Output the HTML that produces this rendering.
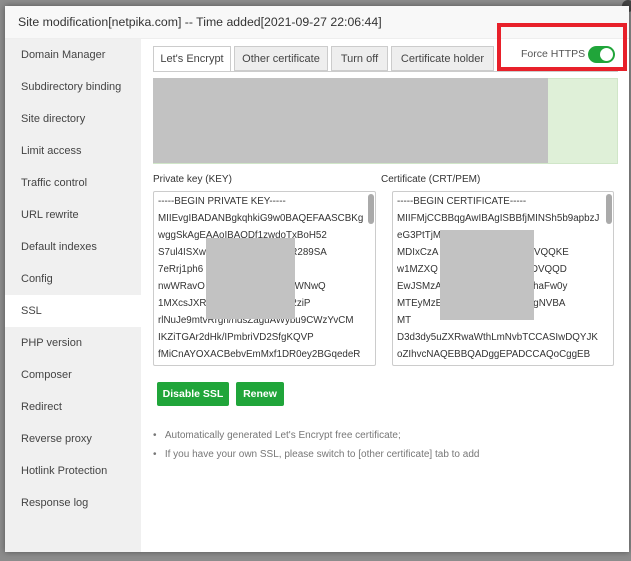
<!DOCTYPE html>
<html><head><style>
*{box-sizing:border-box;margin:0;padding:0}
body{width:631px;height:561px;overflow:hidden;background:#8c8c8c;font-family:"Liberation Sans",sans-serif;position:relative}
.dlg{position:absolute;left:5px;top:6px;width:624px;height:546px;background:#fff;box-shadow:0 0 6px rgba(0,0,0,.4)}
.title{height:33px;background:#f8f8f8;border-bottom:1px solid #eee;font-size:12.3px;color:#333;padding:9px 0 0 13px}
.side{position:absolute;left:0;top:33px;width:136px;bottom:0;background:#f0f0f0}
.side div{height:32px;line-height:32px;font-size:11px;color:#444;padding-left:16px}
.side .on{background:#fff}
.tab{position:absolute;top:0;height:25px;border:1px solid #ccc;background:#eee;font-size:11px;color:#444;text-align:center;line-height:24px}
.tab.on{background:#fff;border-bottom-color:#fff;height:26px}
.green{position:absolute;left:148px;top:72px;width:465px;height:86px;background:#dff0d8;border:1px solid #d0e6c8}
.gray{position:absolute;left:148px;top:72px;width:395px;height:85px;background:#c2c2c2}
.lbl{position:absolute;font-size:10px;color:#333}
.ta{position:absolute;top:185px;height:175px;border:1px solid #ccc;border-radius:2px;background:#fff;overflow:hidden;font-size:9.8px;color:#333;line-height:17px;padding:1px 0 0 4px;white-space:nowrap}
.sb{position:absolute;right:1px;top:2px;width:6px;height:30px;background:#aaa;border-radius:3px}
.btn{position:absolute;top:376px;height:24px;background:#20a53a;color:#fff;font-size:10.5px;font-weight:bold;line-height:24px;text-align:center;border-radius:2px}
.tip{position:absolute;left:148px;font-size:10px;color:#777}
</style></head><body>
<div style="position:absolute;left:622px;top:0;width:12px;height:12px;border-radius:50%;background:#444"></div>
<div class="dlg">
<div class="title">Site modification[netpika.com] -- Time added[2021-09-27 22:06:44]</div>
<div class="side">
<div>Domain Manager</div><div>Subdirectory binding</div><div>Site directory</div><div>Limit access</div><div>Traffic control</div><div>URL rewrite</div><div>Default indexes</div><div>Config</div><div class="on">SSL</div><div>PHP version</div><div>Composer</div><div>Redirect</div><div>Reverse proxy</div><div>Hotlink Protection</div><div>Response log</div>
</div>
<div class="tab on" style="left:148px;top:40px;width:78px">Let's Encrypt</div>
<div class="tab" style="left:229px;top:40px;width:94px">Other certificate</div>
<div class="tab" style="left:326px;top:40px;width:57px">Turn off</div>
<div class="tab" style="left:386px;top:40px;width:103px">Certificate holder</div>
<div style="position:absolute;left:148px;top:65px;width:465px;border-top:1px solid #ccc"></div>
<div class="lbl" style="left:516px;top:42px;font-size:10.5px;color:#555">Force HTTPS</div>
<div style="position:absolute;left:583px;top:40px;width:27px;height:17px;border-radius:9px;background:#20a53a"><div style="position:absolute;right:2px;top:2px;width:13px;height:13px;border-radius:50%;background:#fff"></div></div>
<div style="position:absolute;left:492px;top:17px;width:130px;height:48px;border:4px solid #e8202a"></div>
<div class="green"></div><div class="gray"></div>
<div class="lbl" style="left:148px;top:168px">Private key (KEY)</div>
<div class="lbl" style="left:376px;top:168px">Certificate (CRT/PEM)</div>
<div class="ta" style="left:148px;width:223px">-----BEGIN PRIVATE KEY-----<br>MIIEvgIBADANBgkqhkiG9w0BAQEFAASCBKg<br>wggSkAgEAAoIBAQDf1zwdoTxBoH52<br>S7ul4ISXw&nbsp;&nbsp;&nbsp;&nbsp;&nbsp;&nbsp;&nbsp;&nbsp;&nbsp;&nbsp;&nbsp;&nbsp;&nbsp;&nbsp;&nbsp;&nbsp;&nbsp;&nbsp;&nbsp;&nbsp;zDphHR289SA<br>7eRrj1ph6&nbsp;&nbsp;&nbsp;&nbsp;&nbsp;&nbsp;&nbsp;&nbsp;&nbsp;&nbsp;&nbsp;&nbsp;&nbsp;&nbsp;&nbsp;&nbsp;&nbsp;&nbsp;&nbsp;&nbsp;&nbsp;&nbsp;QR/W<br>nwWRavO&nbsp;&nbsp;&nbsp;&nbsp;&nbsp;&nbsp;&nbsp;&nbsp;&nbsp;&nbsp;&nbsp;&nbsp;&nbsp;&nbsp;&nbsp;&nbsp;&nbsp;&nbsp;&nbsp;&nbsp;6iAfPB4WNwQ<br>1MXcsJXR&nbsp;&nbsp;&nbsp;&nbsp;&nbsp;&nbsp;&nbsp;&nbsp;&nbsp;&nbsp;&nbsp;&nbsp;&nbsp;&nbsp;&nbsp;&nbsp;&nbsp;&nbsp;&nbsp;RiH32T2ziP<br>rlNuJe9mtvRrgn/ndsZaguAWybu9CWzYvCM<br>IKZiTGAr2dHk/IPmbriVD2SfgKQVP<br>fMiCnAYOXACBebvEmMxf1DR0ey2BGqedeR<div class="sb"></div></div>
<div class="ta" style="left:387px;width:222px">-----BEGIN CERTIFICATE-----<br>MIIFMjCCBBqgAwIBAgISBBfjMINSh5b9apbzJ<br>eG3PtTjM&nbsp;&nbsp;&nbsp;&nbsp;&nbsp;&nbsp;&nbsp;&nbsp;&nbsp;&nbsp;&nbsp;&nbsp;&nbsp;&nbsp;&nbsp;&nbsp;&nbsp;&nbsp;&nbsp;&nbsp;&nbsp;CwUA<br>MDIxCzA&nbsp;&nbsp;&nbsp;&nbsp;&nbsp;&nbsp;&nbsp;&nbsp;&nbsp;&nbsp;&nbsp;&nbsp;&nbsp;&nbsp;&nbsp;&nbsp;&nbsp;&nbsp;&nbsp;&nbsp;&nbsp;YwFAYDVQQKE<br>w1MZXQ&nbsp;&nbsp;&nbsp;&nbsp;&nbsp;&nbsp;&nbsp;&nbsp;&nbsp;&nbsp;&nbsp;&nbsp;&nbsp;&nbsp;&nbsp;&nbsp;&nbsp;&nbsp;&nbsp;&nbsp;&nbsp;&nbsp;swCQYDVQQD<br>EwJSMzA&nbsp;&nbsp;&nbsp;&nbsp;&nbsp;&nbsp;&nbsp;&nbsp;&nbsp;&nbsp;&nbsp;&nbsp;&nbsp;&nbsp;&nbsp;&nbsp;&nbsp;&nbsp;&nbsp;&nbsp;&nbsp;DUxMDhaFw0y<br>MTEyMzE&nbsp;&nbsp;&nbsp;&nbsp;&nbsp;&nbsp;&nbsp;&nbsp;&nbsp;&nbsp;&nbsp;&nbsp;&nbsp;&nbsp;&nbsp;&nbsp;&nbsp;&nbsp;&nbsp;&nbsp;GDAWBgNVBA<br>MT<br>D3d3dy5uZXRwaWthLmNvbTCCASIwDQYJK<br>oZIhvcNAQEBBQADggEPADCCAQoCggEB<div class="sb"></div></div>
<div style="position:absolute;left:201px;top:232px;width:89px;height:81px;background:#c2c2c2"></div>
<div style="position:absolute;left:435px;top:224px;width:94px;height:90px;background:#c2c2c2"></div>
<div class="btn" style="left:152px;width:72px">Disable SSL</div>
<div class="btn" style="left:231px;width:48px">Renew</div>
<div class="tip" style="top:424px">•&nbsp;&nbsp;&nbsp;Automatically generated Let's Encrypt free certificate;</div>
<div class="tip" style="top:443px">•&nbsp;&nbsp;&nbsp;If you have your own SSL, please switch to [other certificate] tab to add</div>
</div>
</body></html>
